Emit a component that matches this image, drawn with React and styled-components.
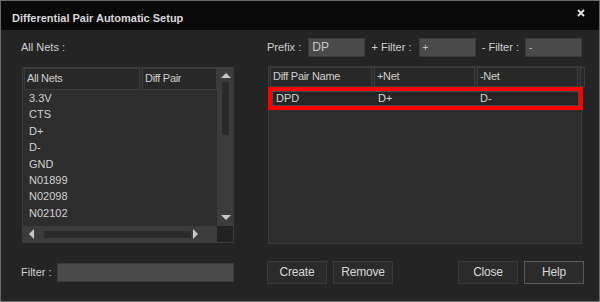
import React from 'react';
import styled, { createGlobalStyle } from 'styled-components';

const GlobalStyle = createGlobalStyle`
  body {
    margin: 0;
    background: #242424;
    font-family: "Liberation Sans", Arial, sans-serif;
  }
`;

const Window = styled.div`
  width: 600px;
  height: 302px;
  box-sizing: border-box;
  border: 1px solid #6a6a6a;
  background: #242424;
  display: flex;
  flex-direction: column;
  color: #d4d4d4;
  font-size: 11px;
`;

const TitleBar = styled.div`
  height: 29px;
  flex: none;
  background: #0a0a0a;
  display: flex;
  align-items: center;
  justify-content: space-between;
  padding: 0 14px 0 11px;
`;

const Title = styled.div`
  font-weight: bold;
  font-size: 11px;
  color: #d8d8d8;
  margin-top: 4px;
`;

const CloseGlyph = styled.svg`
  width: 8px;
  height: 8px;
  margin-top: -6px;
`;

const Body = styled.div`
  flex: 1;
  display: grid;
  grid-template-columns: 213px 317px;
  column-gap: 33px;
  padding: 8px 0 0 20px;
`;

const Column = styled.div`
  display: flex;
  flex-direction: column;
`;

const Label = styled.div`
  height: 19px;
  line-height: 19px;
  white-space: nowrap;
  color: #d0d0d0;
`;

const ListBox = styled.div`
  box-sizing: border-box;
  margin: ${(p) => p.$margin};
  height: ${(p) => p.$height}px;
  border: 1px solid #3b3b3b;
  background: #2d2d2d;
  display: ${(p) => (p.$grid ? 'grid' : 'block')};
  grid-template-columns: 1fr 17px;
  grid-template-rows: 1fr 16px;
  overflow: ${(p) => (p.$grid ? 'hidden' : 'visible')};
`;

const Header = styled.div`
  display: grid;
  grid-template-columns: ${(p) => p.$cols};
  column-gap: 2px;
  padding: 0 0 0 ${(p) => p.$pad}px;
  height: ${(p) => p.$h}px;
`;

const HeaderCell = styled.div`
  box-sizing: border-box;
  background: #282828;
  border: 1px solid #3d3d3d;
  padding-left: 2px;
  line-height: ${(p) => p.$lh}px;
  color: #cfcfcf;
  letter-spacing: -0.3px;
  white-space: nowrap;
  overflow: hidden;
`;

const NetRow = styled.div`
  height: 16.4px;
  line-height: 16.4px;
  padding-left: 6px;
  color: #d2d2d2;
`;

const VScroll = styled.div`
  background: #3c3c3c;
  display: flex;
  flex-direction: column;
  align-items: center;
  justify-content: space-between;
  padding: 5px 0 6px;
`;

const VThumb = styled.div`
  width: 7px;
  height: 53px;
  margin-top: 4px;
  background: #2a2a2a;
  flex: none;
  margin-bottom: auto;
`;

const HScroll = styled.div`
  background: #3c3c3c;
  display: flex;
  align-items: center;
  padding: 0 19px 0 6px;
`;

const HThumb = styled.div`
  width: 147px;
  height: 7px;
  background: #2a2a2a;
  margin: 0 auto 0 10px;
`;

const Corner = styled.div`
  background: #222222;
`;

const Arrow = ({ dir }) => {
  const pts = {
    up: '0,5 5,0 10,5',
    down: '0,0 10,0 5,5',
    left: '5,0 5,10 0,5',
    right: '0,0 0,10 5,5',
  }[dir];
  const vertical = dir === 'up' || dir === 'down';
  return (
    <svg width={vertical ? 10 : 5} height={vertical ? 5 : 10} style={{ flex: 'none' }}>
      <polygon points={pts} fill="#c8c8c8" />
    </svg>
  );
};

const FilterRow = styled.div`
  display: flex;
  align-items: center;
  gap: 5px;
  margin-top: 20px;
  height: 19px;
`;

const Input = styled.div`
  box-sizing: border-box;
  height: 19px;
  width: ${(p) => (p.$w ? `${p.$w}px` : 'auto')};
  flex: ${(p) => (p.$w ? 'none' : '1')};
  background: #4a4a4a;
  border: 1px solid #3a3a3a;
  padding-left: 3px;
  line-height: 17px;
  font-size: ${(p) => p.$fs || 12}px;
  color: #c8c8c8;
`;

const FieldsRow = styled.div`
  display: flex;
  justify-content: space-between;
  margin-right: 2px;
  height: 19px;
`;

const Field = styled.div`
  display: flex;
  align-items: center;
  gap: ${(p) => p.$gap}px;
`;

const PairRow = styled.div`
  box-sizing: border-box;
  margin: 4px 2px 0 3px;
  height: 15px;
  border: 1px solid #4a4a4a;
  background: #262626;
  outline: 4px solid #ff0000;
  display: grid;
  grid-template-columns: 102px 102px 1fr;
  line-height: 13px;
  padding-left: 3px;
  color: #d4d4d4;
`;

const Buttons = styled.div`
  display: flex;
  gap: 6px;
  margin-top: 17px;
`;

const Button = styled.div`
  box-sizing: border-box;
  width: 60px;
  height: 23px;
  line-height: 21px;
  text-align: center;
  font-size: 12px;
  color: #d8d8d8;
  background: #2b2b2b;
  border: 1px solid ${(p) => (p.$default ? '#5a5a5a' : '#3a3a3a')};
  margin-left: ${(p) => (p.$push ? 'auto' : '0')};
  letter-spacing: -0.2px;
`;

const nets = ['3.3V', 'CTS', 'D+', 'D-', 'GND', 'N01899', 'N02098', 'N02102'];

export default function App() {
  return (
    <>
      <GlobalStyle />
      <Window>
        <TitleBar>
          <Title>Differential Pair Automatic Setup</Title>
          <CloseGlyph viewBox="0 0 8 8">
            <path d="M1 1 L7 7 M7 1 L1 7" stroke="#e6e6e6" strokeWidth="1.8" />
          </CloseGlyph>
        </TitleBar>
        <Body>
          <Column>
            <Label>All Nets :</Label>
            <ListBox $grid $margin="10px 0 0 1px" $height={176}>
              <div>
                <Header $cols="116px 75px" $pad={1} $h={22}>
                  <HeaderCell $lh={19}>All Nets</HeaderCell>
                  <HeaderCell $lh={19}>Diff Pair</HeaderCell>
                </Header>
                {nets.map((n) => (
                  <NetRow key={n}>{n}</NetRow>
                ))}
              </div>
              <VScroll>
                <Arrow dir="up" />
                <VThumb />
                <Arrow dir="down" />
              </VScroll>
              <HScroll>
                <Arrow dir="left" />
                <HThumb />
                <Arrow dir="right" />
              </HScroll>
              <Corner />
            </ListBox>
            <FilterRow>
              <Label>Filter :</Label>
              <Input />
            </FilterRow>
          </Column>
          <Column>
            <FieldsRow>
              <Field $gap={7}>
                <Label>Prefix :</Label>
                <Input $w={57}>DP</Input>
              </Field>
              <Field $gap={7}>
                <Label>+ Filter :</Label>
                <Input $w={57} $fs={10}>+</Input>
              </Field>
              <Field $gap={6}>
                <Label>- Filter :</Label>
                <Input $w={57} $fs={10}>-</Input>
              </Field>
            </FieldsRow>
            <ListBox $margin="9px 2px 0 1px" $height={178}>
              <Header $cols="102px 101px 101px 5px" $pad={1} $h={20}>
                <HeaderCell $lh={17}>Diff Pair Name</HeaderCell>
                <HeaderCell $lh={17}>+Net</HeaderCell>
                <HeaderCell $lh={17}>-Net</HeaderCell>
                <HeaderCell $lh={17} />
              </Header>
              <PairRow>
                <span>DPD</span>
                <span>D+</span>
                <span>D-</span>
              </PairRow>
            </ListBox>
            <Buttons>
              <Button>Create</Button>
              <Button>Remove</Button>
              <Button $push>Close</Button>
              <Button $default>Help</Button>
            </Buttons>
          </Column>
        </Body>
      </Window>
    </>
  );
}
